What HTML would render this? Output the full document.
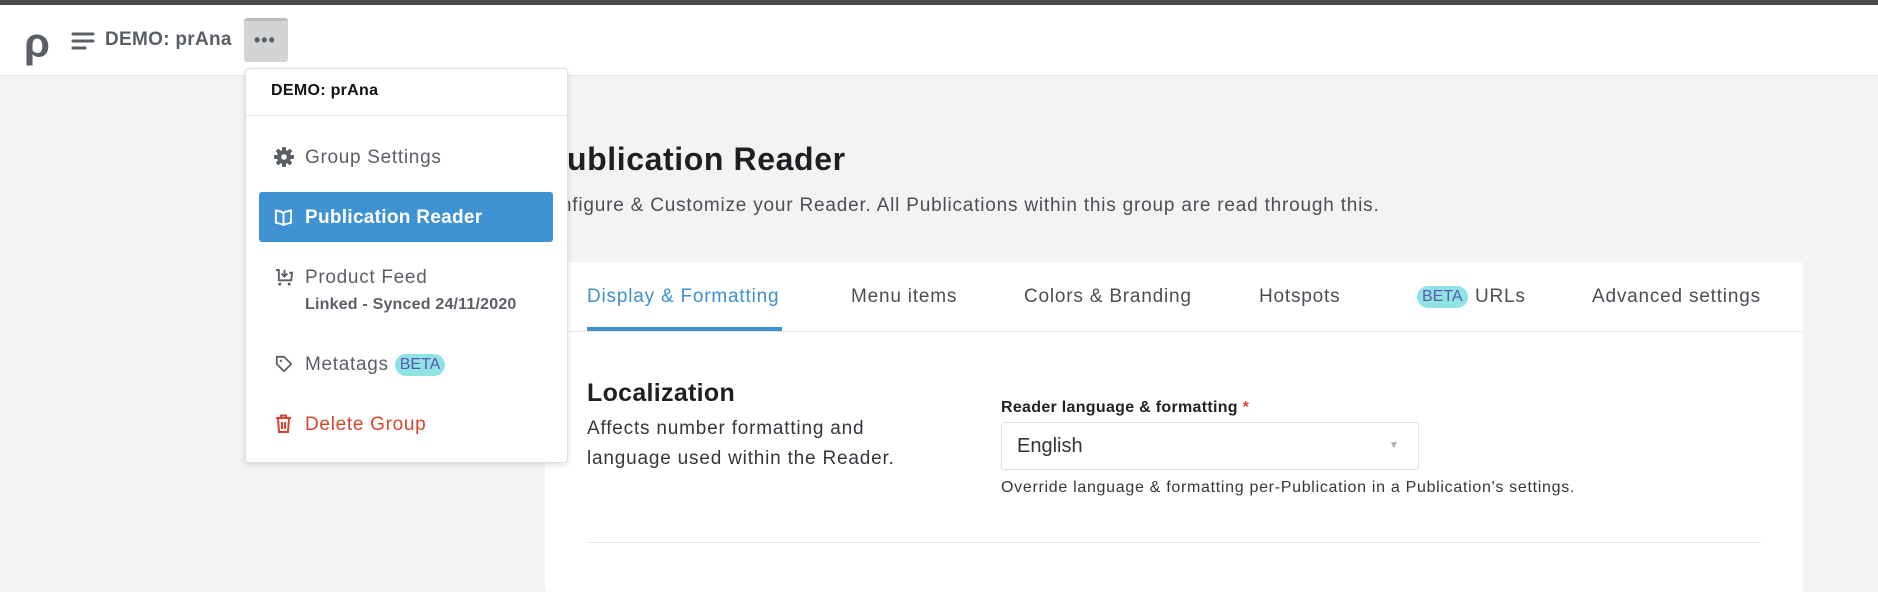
<!DOCTYPE html>
<html><head><meta charset="utf-8"><style>
*{box-sizing:border-box;margin:0;padding:0}
body{width:1878px;height:577px;overflow:hidden;background:#f3f3f3;font-family:"Liberation Sans",sans-serif;position:relative;color:#222}
.a{position:absolute;white-space:nowrap}
.top{left:0;top:0;width:1878px;height:5px;background:#4a4a4a}
.hdr{left:0;top:5px;width:1878px;height:71px;background:#fff;border-bottom:1px solid #e2e2e2}
.card{left:545px;top:262px;width:1258px;height:330px;background:#fff;border-radius:4px}
.dd{left:245px;top:68px;width:323px;height:395px;background:#fff;border:1px solid #e0e0e0;border-radius:4px;box-shadow:0 2px 6px rgba(0,0,0,.12)}
.mi{font-size:19px;letter-spacing:.7px;color:#5a5f66}
.tab{top:286px;font-size:19px;letter-spacing:.8px;color:#4a4f55}
.badge{display:inline-block;height:22px;padding:0 5px;border-radius:11px;background:#8fe3e3;color:#5a58b0;font-size:15px;line-height:22px;letter-spacing:0;vertical-align:1px}
</style></head><body>
<div class="a top"></div>
<div class="a hdr"></div>
<div class="a" style="left:24px;top:22px;font-size:42px;font-weight:bold;color:#5a5f66;line-height:1">ρ</div>
<svg class="a" style="left:71px;top:31px" width="24" height="20"><g stroke="#5a5f66" stroke-width="3" stroke-linecap="round"><line x1="2" y1="3" x2="22" y2="3"/><line x1="2" y1="10" x2="22" y2="10"/><line x1="2" y1="17" x2="14" y2="17"/></g></svg>
<div class="a" style="left:105px;top:29px;font-size:19px;color:#5a5f66;font-weight:bold;letter-spacing:.3px">DEMO: prAna</div>
<div class="a" style="left:244px;top:18px;width:44px;height:44px;background:#d3d4d6;border-radius:3px;border-top:3px solid #bdbec0"></div>
<div class="a" style="left:254px;top:30px;font-size:18px;color:#5a5f66;letter-spacing:1px;font-weight:bold">•••</div>

<div class="a" style="left:545px;top:141px;font-size:32px;font-weight:bold;color:#1d1f22;letter-spacing:.6px">Publication Reader</div>
<div class="a" style="left:535px;top:195px;font-size:19px;letter-spacing:.8px;color:#4a4f55">Configure &amp; Customize your Reader. All Publications within this group are read through this.</div>

<div class="a card"></div>
<div class="a tab" style="left:587px;color:#3d90d1">Display &amp; Formatting</div>
<div class="a" style="left:587px;top:327px;width:195px;height:5px;background:#3d90d1"></div>
<div class="a" style="left:545px;top:331px;width:1258px;height:1px;background:#e5e5e5"></div>
<div class="a tab" style="left:851px">Menu items</div>
<div class="a tab" style="left:1024px">Colors &amp; Branding</div>
<div class="a tab" style="left:1259px">Hotspots</div>
<div class="a" style="left:1417px;top:286px"><span class="badge" style="font-size:16px">BETA</span></div>
<div class="a tab" style="left:1475px">URLs</div>
<div class="a tab" style="left:1592px">Advanced settings</div>

<div class="a" style="left:587px;top:379px;font-size:25px;font-weight:bold;color:#1d1f22;letter-spacing:.3px">Localization</div>
<div class="a" style="left:587px;top:414px;font-size:19px;letter-spacing:.8px;color:#33373c;line-height:30px">Affects number formatting and<br>language used within the Reader.</div>
<div class="a" style="left:1001px;top:399px;font-size:16px;font-weight:bold;color:#222;letter-spacing:.3px">Reader language &amp; formatting <span style="color:#e0443a">*</span></div>
<div class="a" style="left:1001px;top:422px;width:418px;height:48px;border:1px solid #e0e0e0;border-radius:3px;background:#fff"></div>
<div class="a" style="left:1017px;top:435px;font-size:20px;color:#333">English</div>
<div class="a" style="left:1389px;top:440px;font-size:10px;color:#aaa">▼</div>
<div class="a" style="left:1001px;top:479px;font-size:16px;letter-spacing:.7px;color:#33373c">Override language &amp; formatting per-Publication in a Publication's settings.</div>
<div class="a" style="left:587px;top:542px;width:1174px;height:1px;background:#e5e5e5"></div>

<div class="a dd"></div>
<div class="a" style="left:271px;top:82px;font-size:16px;color:#111;font-weight:bold;letter-spacing:.3px">DEMO: prAna</div>
<div class="a" style="left:245px;top:115px;width:323px;height:1px;background:#e5e5e5"></div>
<svg class="a" style="left:274px;top:147px" width="20" height="20" viewBox="0 0 20 20"><g fill="#5a5f66" transform="translate(10 10)"><rect x="-2" y="-10" width="4" height="20" rx="1"/><rect x="-2" y="-10" width="4" height="20" rx="1" transform="rotate(45)"/><rect x="-2" y="-10" width="4" height="20" rx="1" transform="rotate(90)"/><rect x="-2" y="-10" width="4" height="20" rx="1" transform="rotate(135)"/><circle r="7"/></g><circle cx="10" cy="10" r="2.8" fill="#fff"/></svg>
<div class="a mi" style="left:305px;top:147px">Group Settings</div>
<div class="a" style="left:259px;top:192px;width:294px;height:50px;background:#3f93d3;border-radius:3px"></div>
<svg class="a" style="left:274px;top:208px" width="19" height="18" viewBox="0 0 20 18"><path d="M2 2l6 1.5 2 1.5 2-1.5L18 2v13l-6 1.5-2 1-2-1L2 15z M10 5v12" fill="none" stroke="#fff" stroke-width="2" stroke-linejoin="round"/></svg>
<div class="a mi" style="left:305px;top:207px;color:#fff;font-weight:bold;letter-spacing:.3px">Publication Reader</div>
<svg class="a" style="left:275px;top:268px" width="19" height="19" viewBox="0 0 20 20"><path d="M1 2h3v11h13l1-8h-3 M10 2v6 M7 6l3 3 3-3" fill="none" stroke="#5a5f66" stroke-width="2"/><circle cx="5" cy="17" r="1.6" fill="#5a5f66"/><circle cx="15" cy="17" r="1.6" fill="#5a5f66"/></svg>
<div class="a mi" style="left:305px;top:267px">Product Feed</div>
<div class="a" style="left:305px;top:296px;font-size:16px;color:#5a5f66;font-weight:bold;letter-spacing:.2px">Linked - Synced 24/11/2020</div>
<svg class="a" style="left:275px;top:355px" width="18" height="18" viewBox="0 0 20 20"><path d="M2 2h8l8 8-8 8-8-8z" fill="none" stroke="#5a5f66" stroke-width="2" stroke-linejoin="round"/><circle cx="6.5" cy="6.5" r="1.3" fill="#5a5f66"/></svg>
<div class="a mi" style="left:305px;top:354px">Metatags <span class="badge" style="font-size:16px">BETA</span></div>
<svg class="a" style="left:275px;top:414px" width="17" height="19" viewBox="0 0 17 19"><path d="M1 4h15 M6 4V1.5h5V4 M3 4l1 14h9l1-14 M7 8v7 M10 8v7" fill="none" stroke="#d9442f" stroke-width="2"/></svg>
<div class="a mi" style="left:305px;top:414px;color:#d9442f">Delete Group</div>
</body></html>
